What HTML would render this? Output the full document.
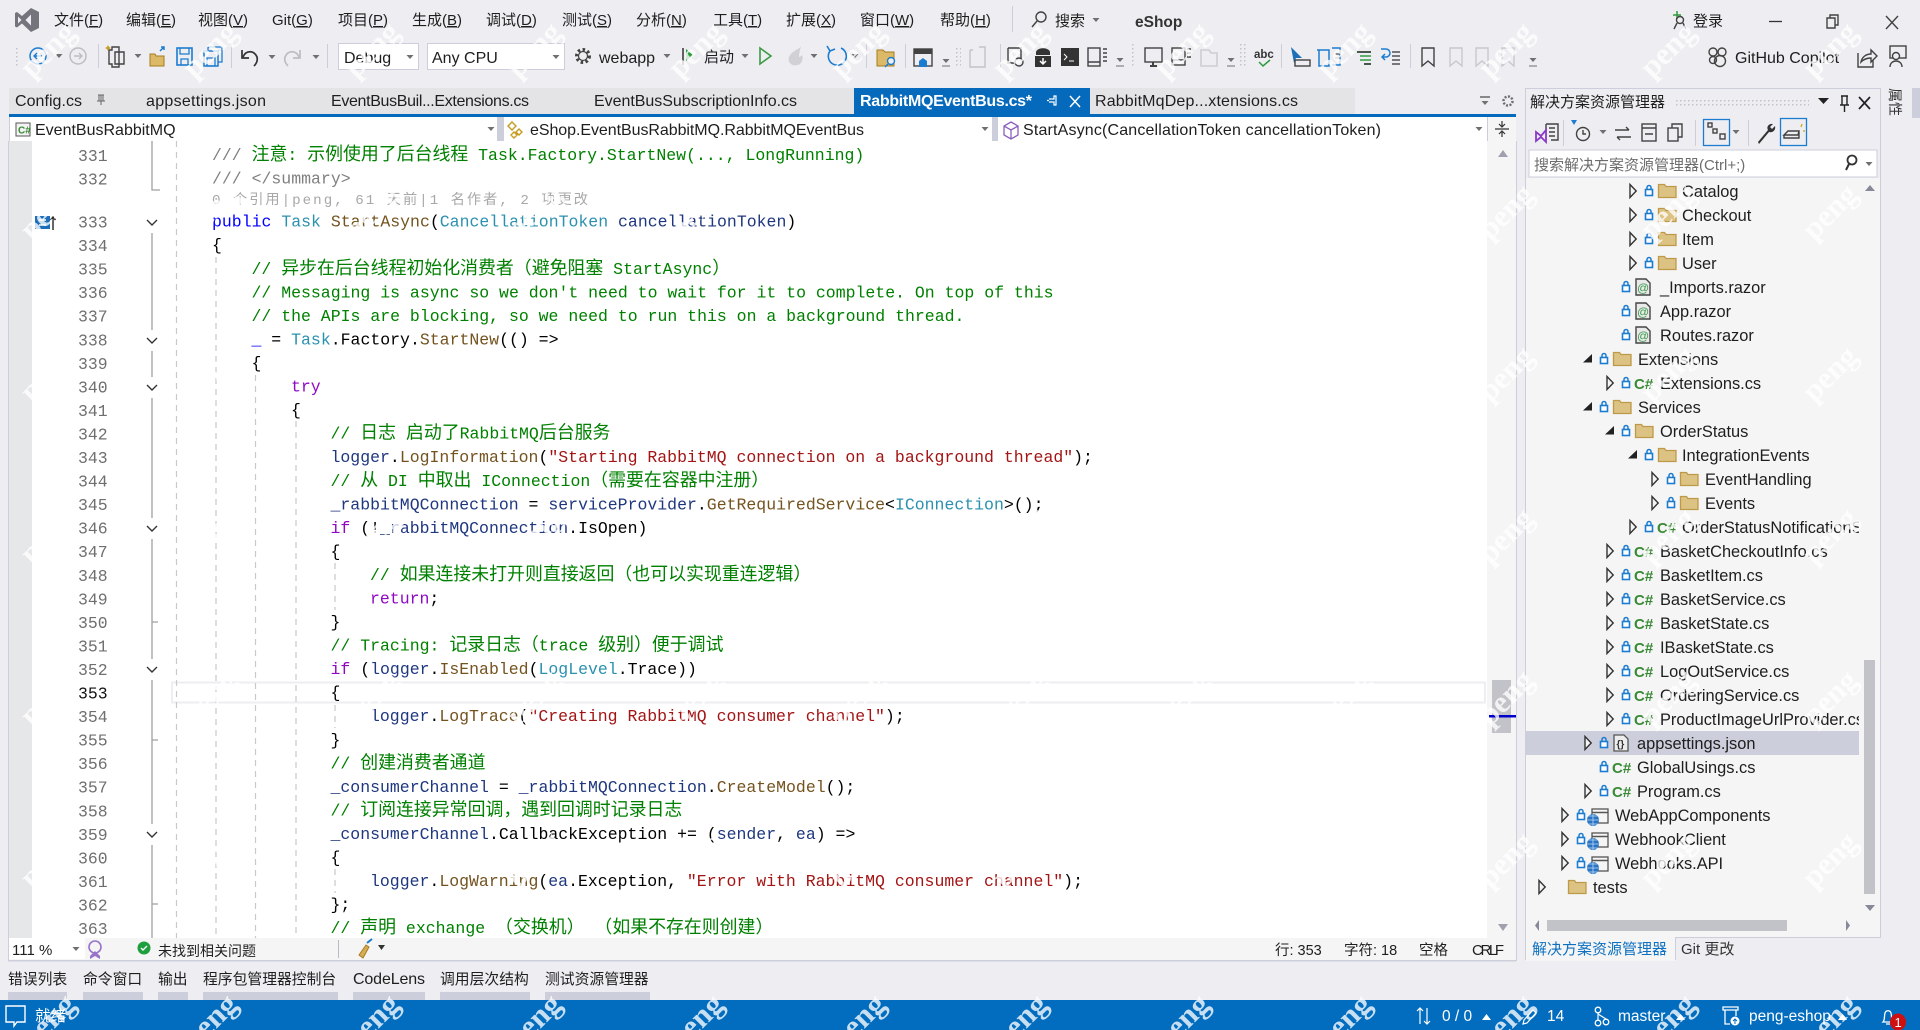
<!DOCTYPE html>
<html lang="zh"><head><meta charset="utf-8"><title>eShop</title>
<style>
html,body{margin:0;padding:0;background:#EEEEF2;width:1920px;height:1030px;overflow:hidden}
svg{display:block}
text{white-space:pre;font-family:"Liberation Sans","Noto Sans CJK SC",sans-serif;font-size:16px;fill:#1E1E1E}
.mn{font-size:15px}
.u{text-decoration:underline}
.code text,text.code{font-family:"Liberation Mono","Noto Sans CJK SC",monospace;font-size:16.5px;fill:#000}
.zh{font-family:"Noto Sans CJK SC",sans-serif;font-size:17.9px}
.c{fill:#008000}.d{fill:#808080}.k{fill:#0000FF}.f{fill:#8F08C4}.t{fill:#2B91AF}.m{fill:#74531F}.s{fill:#A31515}.v{fill:#1F377F}
.ln text{font-family:"Liberation Mono",monospace;font-size:16.47px;fill:#6F6F6F}
.tr text{font-size:16.4px;fill:#1E1E1E}
.tr text.cs{font-size:15px;font-weight:bold;fill:#388A34}
.w text{fill:#fff;font-size:15.5px}
.ic{fill:none;stroke:#424242;stroke-width:1.4}
</style></head><body>
<svg xmlns="http://www.w3.org/2000/svg" width="1920" height="1030" viewBox="0 0 1920 1030">
<defs>
<path id="dd" d="M-3.5-2h7l-3.5 4z" fill="#707070"/>
<path id="ch" d="M-3-6.5L3.2 0-3 6.5z" fill="#F5F5F5" stroke="#333" stroke-width="1.4"/>
<path id="cd" d="M4-5V3.5H-5z" fill="#222"/>
<g id="lk"><rect x="-3.5" y="-1.5" width="7" height="6" fill="#fff" stroke="#1C7CD0" stroke-width="1.6"/><path d="M-2-2v-1.5a2 2 0 0 1 4 0V-2" fill="none" stroke="#1C7CD0" stroke-width="1.5"/></g>
<path id="fo" d="M-8.5-6.5h6l1.5 2h10v11h-17.500z" fill="#DCC383" stroke="#BE9A48" stroke-width="1.3"/>
<g id="rz"><path d="M-7-8h10l4 4v12H-7z" fill="#E9E9E9" stroke="#444" stroke-width="1.4"/><text x="-6" y="5" style="font-size:12px;fill:#3C9A4B">@</text></g>
<g id="js"><path d="M-7-8h10l4 4v12H-7z" fill="#EDEDED" stroke="#555" stroke-width="1.3"/><text x="-4.500" y="4.500" style="font-size:10px;fill:#333;font-weight:bold">{}</text></g>
<g id="pj"><rect x="-6" y="-8" width="16" height="14" fill="#F5F5F5" stroke="#555" stroke-width="1.3"/><path d="M-6-4.500h16" stroke="#555" stroke-width="1.5"/><circle cx="-5" cy="3" r="6" fill="#2A74C5"/><path d="M-11 3h12M-5-3v12M-9.500-1h9M-9.500 7h9" stroke="#BFD8F2" stroke-width=".8"/></g>
<pattern id="wm" patternUnits="userSpaceOnUse" x="-32" y="-30" width="162" height="162"><text x="81" y="89" text-anchor="middle" transform="rotate(-45 81 81)" style="font-family:'Liberation Serif',serif;font-size:31px;font-weight:bold;fill:#fff;fill-opacity:.78">peng</text></pattern>
<clipPath id="trc"><rect x="1526" y="180" width="333" height="720"/></clipPath>
<clipPath id="edc"><rect x="9" y="141" width="1478" height="797"/></clipPath>
<pattern id="gr" patternUnits="userSpaceOnUse" width="4" height="4"><rect width="1.500" height="1.500" fill="#C2C2C8"/></pattern>
</defs>

<!-- backgrounds -->
<rect width="1920" height="1030" fill="#EEEEF2"/>
<rect x="9" y="88" width="1346" height="26" fill="#E4E4E6"/>
<rect x="854" y="88" width="236" height="26" fill="#0569BC"/>
<rect x="9" y="114" width="1507" height="3" fill="#0569BC"/>
<rect x="9" y="117" width="1507" height="24" fill="#CCCEDB"/>
<rect x="10" y="117" width="487" height="24" fill="#fff"/>
<rect x="504" y="117" width="488" height="24" fill="#fff"/>
<rect x="998" y="117" width="489" height="24" fill="#fff"/>
<rect x="1488" y="117" width="28" height="24" fill="#F5F5F5"/>
<rect x="9" y="141" width="1507" height="797" fill="#fff"/>
<rect x="9" y="141" width="23" height="797" fill="#E6E7E8"/>
<rect x="1487" y="141" width="29" height="797" fill="#F5F5F5"/>
<rect x="9" y="938" width="1507" height="22" fill="#F5F5F5"/>
<rect x="9" y="938" width="76" height="21" fill="#fff"/>
<rect x="8" y="960" width="1508" height="1.500" fill="#CCCEDB"/>
<rect x="1516" y="141" width="1" height="820" fill="#CCCEDB"/>
<rect x="8" y="141" width="1" height="820" fill="#CCCEDB"/>
<!-- explorer panel -->
<rect x="1525" y="88" width="356" height="872" fill="#CCCEDB"/>
<rect x="1526" y="89" width="354" height="848" fill="#EEEEF2"/>
<rect x="1526" y="178" width="354" height="759" fill="#F5F5F5"/>
<rect x="1529" y="150" width="348" height="27" fill="#fff" stroke="#CCCEDB"/>
<rect x="1526" y="937" width="149" height="24" fill="#F5F5F5"/>
<rect x="1676" y="938" width="205" height="23" fill="#EEEEF2"/>
<rect x="1526" y="731" width="333" height="24" fill="#CCCEDB"/>
<rect x="1864" y="660" width="11" height="234" fill="#C2C3C9"/>
<rect x="1547" y="920" width="240" height="11" fill="#C2C3C9"/>
<path d="M1870 185l5 6h-10zM1870 911l5-6h-10zM1539 920v11l-4-5.500zM1846 920v11l4-5.500z" fill="#868999"/>
<rect x="1912" y="88" width="8" height="30" fill="#CCCEDB"/>
<!-- status and bottom tabs -->
<rect x="8" y="992" width="59" height="8" fill="#CCCEDB"/><rect x="83" y="992" width="60" height="8" fill="#CCCEDB"/><rect x="158" y="992" width="30" height="8" fill="#CCCEDB"/><rect x="203" y="992" width="135" height="8" fill="#CCCEDB"/><rect x="353" y="992" width="72" height="8" fill="#CCCEDB"/><rect x="440" y="992" width="90" height="8" fill="#CCCEDB"/><rect x="545" y="992" width="105" height="8" fill="#CCCEDB"/>
<rect y="1000" width="1920" height="30" fill="#026CBE"/>

<!-- editor decorations -->
<rect x="172" y="682.500" width="1313" height="20" fill="#fff" stroke="#EEEEF2" stroke-width="2"/>
<rect x="1492" y="680" width="19" height="53" fill="#C2C3C9"/>
<path d="M1503 150l5 7h-10zM1503 931l5-7h-10z" fill="#A0A1AC"/>
<rect x="1489" y="715" width="27" height="2.500" fill="#0000CD"/>
<g stroke="#C9C9C9" stroke-dasharray="6 5" stroke-width="1.200" clip-path="url(#edc)">
<path d="M176.500 141V938"/><path d="M216 257V938"/><path d="M255.500 375V938"/><path d="M296 421V938"/><path d="M335 563V610M335 705V728M335 869V893"/>
</g>
<g stroke="#A0A0A0" stroke-width="1.300" fill="none">
<path d="M152 141V190H160M152 233V330M152 351V377M152 398V518M152 539V659M152 680V824M152 845V938"/>
<path d="M152 622h6M152 740h6M152 904h6"/>
</g>
<g fill="none" stroke="#333" stroke-width="1.400">
<path d="M147 220l5 5 5-5M147 338l5 5 5-5M147 385l5 5 5-5M147 526l5 5 5-5M147 667l5 5 5-5M147 832l5 5 5-5"/>
</g>
<rect x="35" y="216" width="15" height="13" fill="#1C6FB8"/><path d="M39 220h7M39 225h7" stroke="#fff" stroke-width="1.500"/><path d="M53 230v-13m-2.500 3l2.500-3 2.500 3" stroke="#333" stroke-width="1.500" fill="none"/>

<!-- line numbers -->
<g class="ln">
<text x="78" y="161">331</text><text x="78" y="184.500">332</text><text x="78" y="227.500">333</text><text x="78" y="251">334</text><text x="78" y="274.600">335</text><text x="78" y="298.200">336</text><text x="78" y="321.700">337</text><text x="78" y="345.300">338</text><text x="78" y="368.800">339</text><text x="78" y="392.400">340</text><text x="78" y="415.900">341</text><text x="78" y="439.500">342</text><text x="78" y="463">343</text><text x="78" y="486.600">344</text><text x="78" y="510.100">345</text><text x="78" y="533.700">346</text><text x="78" y="557.200">347</text><text x="78" y="580.800">348</text><text x="78" y="604.300">349</text><text x="78" y="627.900">350</text><text x="78" y="651.400">351</text><text x="78" y="675">352</text><text x="78" y="698.500" style="fill:#111">353</text><text x="78" y="722">354</text><text x="78" y="745.600">355</text><text x="78" y="769.200">356</text><text x="78" y="792.700">357</text><text x="78" y="816.300">358</text><text x="78" y="839.800">359</text><text x="78" y="863.400">360</text><text x="78" y="886.900">361</text><text x="78" y="910.500">362</text><text x="78" y="934">363</text>
</g>

<!-- code -->
<g class="code" clip-path="url(#edc)"><g transform="translate(0,-.8)">
<text x="212" y="161"><tspan class="d">/// </tspan><tspan class="c"><tspan class="zh">注意</tspan>: <tspan class="zh">示例使用了后台线程</tspan> Task.Factory.StartNew(..., LongRunning)</tspan></text>
<text x="212" y="184.500" class="d" style="fill:#808080">/// &lt;/summary&gt;</text>
<text x="212" y="205" textLength="376" style="fill:#A8A8A8;font-size:14.200px">0 个引用|peng, 61 天前|1 名作者, 2 项更改</text>
<text x="212" y="227.500"><tspan class="k">public</tspan> <tspan class="t">Task</tspan> <tspan class="m">StartAsync</tspan>(<tspan class="t">CancellationToken</tspan> <tspan class="v">cancellationToken</tspan>)</text>
<text x="212" y="251">{</text>
<text x="251.500" y="274.600" class="c" style="fill:#008000">// <tspan class="zh">异步在后台线程初始化消费者（避免阻塞</tspan> StartAsync<tspan class="zh">）</tspan></text>
<text x="251.500" y="298.200" style="fill:#008000">// Messaging is async so we don't need to wait for it to complete. On top of this</text>
<text x="251.500" y="321.700" style="fill:#008000">// the APIs are blocking, so we need to run this on a background thread.</text>
<text x="251.500" y="345.300"><tspan class="k">_</tspan> = <tspan class="t">Task</tspan>.Factory.<tspan class="m">StartNew</tspan>(() =&gt;</text>
<text x="251.500" y="368.800">{</text>
<text x="291" y="392.400" style="fill:#8F08C4">try</text>
<text x="291" y="415.900">{</text>
<text x="330.500" y="439.500" style="fill:#008000">// <tspan class="zh">日志</tspan> <tspan class="zh">启动了</tspan>RabbitMQ<tspan class="zh">后台服务</tspan></text>
<text x="330.500" y="463"><tspan class="v">logger</tspan>.<tspan class="m">LogInformation</tspan>(<tspan class="s">"Starting RabbitMQ connection on a background thread"</tspan>);</text>
<text x="330.500" y="486.600" style="fill:#008000">// <tspan class="zh">从</tspan> DI <tspan class="zh">中取出</tspan> IConnection<tspan class="zh">（需要在容器中注册）</tspan></text>
<text x="330.500" y="510.100"><tspan class="v">_rabbitMQConnection</tspan> = <tspan class="v">serviceProvider</tspan>.<tspan class="m">GetRequiredService</tspan>&lt;<tspan class="t">IConnection</tspan>&gt;();</text>
<text x="330.500" y="533.700"><tspan class="f">if</tspan> (!<tspan class="v">_rabbitMQConnection</tspan>.IsOpen)</text>
<text x="330.500" y="557.200">{</text>
<text x="370" y="580.800" style="fill:#008000">// <tspan class="zh">如果连接未打开则直接返回（也可以实现重连逻辑）</tspan></text>
<text x="370" y="604.300"><tspan class="f">return</tspan>;</text>
<text x="330.500" y="627.900">}</text>
<text x="330.500" y="651.400" style="fill:#008000">// Tracing: <tspan class="zh">记录日志（</tspan>trace <tspan class="zh">级别）便于调试</tspan></text>
<text x="330.500" y="675"><tspan class="f">if</tspan> (<tspan class="v">logger</tspan>.<tspan class="m">IsEnabled</tspan>(<tspan class="t">LogLevel</tspan>.Trace))</text>
<text x="330.500" y="698.500">{</text>
<text x="370" y="722"><tspan class="v">logger</tspan>.<tspan class="m">LogTrace</tspan>(<tspan class="s">"Creating RabbitMQ consumer channel"</tspan>);</text>
<text x="330.500" y="745.600">}</text>
<text x="330.500" y="769.200" style="fill:#008000">// <tspan class="zh">创建消费者通道</tspan></text>
<text x="330.500" y="792.700"><tspan class="v">_consumerChannel</tspan> = <tspan class="v">_rabbitMQConnection</tspan>.<tspan class="m">CreateModel</tspan>();</text>
<text x="330.500" y="816.300" style="fill:#008000">// <tspan class="zh">订阅连接异常回调，遇到回调时记录日志</tspan></text>
<text x="330.500" y="839.800"><tspan class="v">_consumerChannel</tspan>.CallbackException += (<tspan class="v">sender</tspan>, <tspan class="v">ea</tspan>) =&gt;</text>
<text x="330.500" y="863.400">{</text>
<text x="370" y="886.900"><tspan class="v">logger</tspan>.<tspan class="m">LogWarning</tspan>(<tspan class="v">ea</tspan>.Exception, <tspan class="s">"Error with RabbitMQ consumer channel"</tspan>);</text>
<text x="330.500" y="910.500">};</text>
<text x="330.500" y="934" style="fill:#008000">// <tspan class="zh">声明</tspan> exchange <tspan class="zh">（交换机）</tspan> <tspan class="zh">（如果不存在则创建）</tspan></text>
</g></g>

<!-- menu -->
<path fill-rule="evenodd" d="M31 8l8 4v16l-8 4-9-8.500-5 4-2-1V13l2-1 5 4zM31 14.500L25.500 20l5.500 5.500zM18 16.500v7l3.500-3.500z" fill="#74747C"/>
<g class="mnu">
<text class="mn" x="54" y="25">文件(<tspan class="u">F</tspan>)</text><text class="mn" x="126" y="25">编辑(<tspan class="u">E</tspan>)</text><text class="mn" x="198" y="25">视图(<tspan class="u">V</tspan>)</text><text class="mn" x="272" y="25">Git(<tspan class="u">G</tspan>)</text><text class="mn" x="338" y="25">项目(<tspan class="u">P</tspan>)</text><text class="mn" x="412" y="25">生成(<tspan class="u">B</tspan>)</text><text class="mn" x="486" y="25">调试(<tspan class="u">D</tspan>)</text><text class="mn" x="562" y="25">测试(<tspan class="u">S</tspan>)</text><text class="mn" x="636" y="25">分析(<tspan class="u">N</tspan>)</text><text class="mn" x="713" y="25">工具(<tspan class="u">T</tspan>)</text><text class="mn" x="786" y="25">扩展(<tspan class="u">X</tspan>)</text><text class="mn" x="860" y="25">窗口(<tspan class="u">W</tspan>)</text><text class="mn" x="940" y="25">帮助(<tspan class="u">H</tspan>)</text>
</g>
<rect x="1012" y="6" width="1" height="26" fill="#CCCEDB"/>
<circle cx="1041" cy="17" r="5" class="ic"/><path d="M1037 21l-5 6" class="ic"/>
<text class="mn" x="1055" y="26">搜索</text><use href="#dd" x="1096" y="20"/>
<text x="1135" y="27" style="font-size:15.500px;font-weight:bold;fill:#333">eShop</text>
<path d="M1677 11v8M1673 15h8" stroke="#2E9B3D" stroke-width="1.500"/><circle cx="1680" cy="20" r="3.500" class="ic"/><path d="M1674 29l3-6M1686 29l-3-6" class="ic"/>
<text class="mn" x="1693" y="26">登录</text>
<path d="M1769 21.500h13" stroke="#333" stroke-width="1.300"/>
<path d="M1827 18h8v10h-8zM1830 18v-3h8v10h-3" class="ic"/>
<path d="M1886 16l12 13M1898 16l-12 13" class="ic"/>

<!-- toolbar -->
<rect x="14" y="46" width="6" height="20" fill="url(#gr)"/>
<circle cx="38" cy="56" r="8" fill="none" stroke="#1C7CD0" stroke-width="1.500"/><path d="M42 56h-8m3-3l-3 3 3 3" fill="none" stroke="#1C7CD0" stroke-width="1.400"/><use href="#dd" x="59" y="56"/>
<circle cx="78" cy="56" r="8" fill="none" stroke="#BDBDC2" stroke-width="1.500"/><path d="M74 56h8m-3-3l3 3-3 3" fill="none" stroke="#BDBDC2" stroke-width="1.400"/>
<rect x="98" y="44" width="1" height="24" fill="#CCCEDB"/>
<path d="M109 50h3v-3h7v20h-7v-3h-3z" class="ic"/><path d="M115 52h9v12h-9z" class="ic"/><path d="M108 45l1 2 2 1-2 1-1 2-1-2-2-1 2-1z" fill="#C79A20"/><use href="#dd" x="138" y="56"/>
<path d="M150 54h5l1 2h8v10h-14z" fill="#DCB967" stroke="#A67C20"/><path d="M160 51l4-4m-3 0h3v3" stroke="#1C7CD0" stroke-width="1.500" fill="none"/>
<rect x="177" y="48" width="15" height="17" fill="none" stroke="#1C7CD0" stroke-width="1.600"/><path d="M180 48v6h9v-6M181 65v-6h7v6" fill="none" stroke="#1C7CD0" stroke-width="1.300"/>
<rect x="204" y="51" width="14" height="15" fill="none" stroke="#1C7CD0" stroke-width="1.500"/><path d="M208 51v-4h14v15h-4M207 58h8v8h-8z" fill="none" stroke="#1C7CD0" stroke-width="1.300"/>
<rect x="231" y="44" width="1" height="24" fill="#CCCEDB"/>
<path d="M242 50v8h7M243 57c3-7 11-7 14 0 1 4-1 7-3 9" fill="none" stroke="#333" stroke-width="1.700"/><use href="#dd" x="272" y="57"/>
<path d="M300 50v8h-7M299 57c-3-7-11-7-14 0-1 4 1 7 3 9" fill="none" stroke="#BDBDC2" stroke-width="1.700"/><use href="#dd" x="316" y="57"/>
<rect x="327" y="44" width="1" height="24" fill="#CCCEDB"/>
<rect x="338.500" y="43.500" width="80" height="26" fill="#fff" stroke="#CCCEDB"/><text x="344" y="63">Debug</text><use href="#dd" x="410" y="57"/>
<rect x="427.500" y="43.500" width="137" height="26" fill="#fff" stroke="#CCCEDB"/><text x="432" y="63">Any CPU</text><use href="#dd" x="556" y="57"/>
<circle cx="583" cy="56" r="6.500" fill="none" stroke="#424242" stroke-width="3" stroke-dasharray="2.500 2.500"/><circle cx="583" cy="56" r="4.500" fill="none" stroke="#424242" stroke-width="1.200"/>
<text x="599" y="63">webapp</text><use href="#dd" x="667" y="56"/>
<path d="M683 48v17" stroke="#333" stroke-width="1.500"/><path d="M686 49l7 6-7 6z" fill="#2E9B3D"/>
<text class="mn" x="704" y="62">启动</text><use href="#dd" x="745" y="56"/>
<path d="M760 48l11 8-11 8z" fill="none" stroke="#3B9B47" stroke-width="1.600"/>
<path d="M801 46c-1 3-7 4-10 8-3 3-3 7-1 9 2 3 7 3 10 1 3-3 3-7 2-9-1 1-2 2-3 2 0-4 1-7 2-11z" fill="#D0D0D5"/><use href="#dd" x="814" y="56"/>
<path d="M841 48a9 9 0 1 1-11 3M827 46l3 5 5-2" fill="none" stroke="#1C7CD0" stroke-width="1.600"/><use href="#dd" x="855" y="56"/>
<rect x="866" y="44" width="1" height="24" fill="#CCCEDB"/>
<path d="M877 50h6l2 2h9v14h-17z" fill="#DCB967" stroke="#A67C20"/><circle cx="891" cy="61" r="3.500" fill="#EEEEF2" stroke="#1C7CD0" stroke-width="1.400"/><path d="M888 64l-3 3" stroke="#1C7CD0" stroke-width="1.500"/>
<rect x="905" y="44" width="1" height="24" fill="#CCCEDB"/>
<rect x="914" y="49" width="18" height="17" class="ic"/><rect x="914" y="49" width="18" height="5" fill="#424242"/><path d="M919 67v-6l4-3 4 3v6z" fill="#1C7CD0"/>
<use href="#dd" x="946" y="61"/><path d="M942 66h8" stroke="#707070"/>
<rect x="956" y="46" width="5" height="22" fill="url(#gr)"/>
<path d="M970 50h3M979 47h6v20h-15V50" fill="none" stroke="#C4C4C8" stroke-width="1.400"/>
<rect x="1000" y="44" width="1" height="24" fill="#CCCEDB"/>
<path d="M1008 48h13v10M1008 48v15h6" class="ic"/><circle cx="1019" cy="62" r="4" class="ic"/>
<path d="M1036 52c1-5 13-5 14 0v3h-14z" fill="#333"/><path d="M1035 56h16v11h-16z" fill="#333"/><path d="M1043 58v5m-3-2l3 3 3-3" stroke="#fff" stroke-width="1.500" fill="none"/>
<rect x="1061" y="48" width="18" height="18" fill="#333"/><path d="M1064 54l3 3-3 3M1069 61h5" stroke="#fff" fill="none"/>
<rect x="1088" y="48" width="12" height="18" class="ic"/><path d="M1088 62h12M1103 49h4M1103 53h4M1103 57h4M1103 61h4" stroke="#424242" stroke-width="1.500"/>
<use href="#dd" x="1120" y="60"/><path d="M1116 66h8" stroke="#707070"/><rect x="1130" y="44" width="6" height="24" fill="url(#gr)"/>
<rect x="1145" y="48" width="17" height="14" class="ic"/><path d="M1150 66h7M1153 62v4" stroke="#424242" stroke-width="2"/>
<rect x="1172" y="48" width="13" height="17" class="ic"/><path d="M1172 60h13M1187 49h4M1187 53h4M1187 57h4" stroke="#424242" stroke-width="1.400"/>
<path d="M1201 50h8l2 3h6v13h-16z" fill="none" stroke="#CDCDD1" stroke-width="1.600"/>
<use href="#dd" x="1231" y="60"/><path d="M1227 66h8" stroke="#707070"/><rect x="1240" y="44" width="6" height="24" fill="url(#gr)"/>
<text x="1254" y="58" style="font-size:11.500px;font-weight:bold;fill:#333">abc</text><path d="M1259 62l4 4 7-6" fill="none" stroke="#2E9B3D" stroke-width="1.500"/>
<rect x="1281" y="44" width="1" height="24" fill="#CCCEDB"/>
<path d="M1291 47l11 11h-6l-2 5z" fill="#1C6FB8"/><rect x="1295" y="60" width="15" height="6" class="ic"/>
<path d="M1319 50h10v16h-10zM1319 50h-2M1332 48h8v17h-8" fill="none" stroke="#1C7CD0" stroke-width="1.500"/><path d="M1335 54h5M1335 58h5" stroke="#333"/>
<path d="M1357 52h14M1360 56h11M1360 60h11M1364 64h7" stroke="#2E9B3D" stroke-width="1.500"/><path d="M1357 52h14M1364 64h7" stroke="#333" stroke-width="1.500"/>
<path d="M1381 49h5a4 4 0 0 1 0 8h-3m2-3l-3 3 3 3" stroke="#1C7CD0" stroke-width="1.500" fill="none"/><path d="M1392 52h8M1392 56h8M1392 60h8M1392 64h8" stroke="#333" stroke-width="1.300"/>
<rect x="1410" y="44" width="1" height="24" fill="#CCCEDB"/>
<path d="M1422 48h12v18l-6-5-6 5z" class="ic"/>
<path d="M1450 48h12v18l-6-5-6 5z" fill="none" stroke="#C8C8CC" stroke-width="1.400"/><path d="M1476 48h12v18l-6-5-6 5z" fill="none" stroke="#C8C8CC" stroke-width="1.400"/><path d="M1502 48h12v18l-6-5-6 5z" fill="none" stroke="#C8C8CC" stroke-width="1.400"/>
<use href="#dd" x="1533" y="60"/><path d="M1529 66h8" stroke="#707070"/>
<circle cx="1713" cy="52" r="4" class="ic"/><circle cx="1722" cy="52" r="4" class="ic"/><circle cx="1720" cy="61" r="5.500" class="ic"/><circle cx="1713" cy="60" r="3.500" class="ic"/>
<text x="1735" y="63">GitHub Copilot</text>
<path d="M1858 53v14h15v-7M1861 62c1-5 5-8 10-8v-4l6 6-6 6v-4c-4 0-7 1-10 4z" class="ic"/>
<rect x="1890" y="46" width="16" height="12" class="ic"/><circle cx="1896" cy="56" r="3.500" fill="#EEEEF2" stroke="#424242" stroke-width="1.400"/><path d="M1890 67c0-4 3-6 6-6s6 2 6 6" class="ic"/>

<!-- document tabs -->
<text x="15" y="106" textLength="67">Config.cs</text><path d="M98 95h6M101 95v6M97 101h8M101 101v4M99 95v6M103 95v6" stroke="#666" fill="none"/>
<text x="146" y="106" textLength="120">appsettings.json</text>
<text x="331" y="106" textLength="198">EventBusBuil...Extensions.cs</text>
<text x="594" y="106" textLength="203">EventBusSubscriptionInfo.cs</text>
<text x="860" y="106" textLength="172" style="fill:#fff;font-weight:bold">RabbitMQEventBus.cs*</text>
<path d="M1049 99h5v-3h2v9h-2v-3h-5M1047 100.500h2" stroke="#fff" stroke-width="1.200" fill="none"/>
<path d="M1070 96l10 11M1080 96l-10 11" stroke="#fff" stroke-width="1.500"/>
<text x="1095" y="106" textLength="203">RabbitMqDep...xtensions.cs</text>
<path d="M1480 97h10" stroke="#666" stroke-width="1.500"/><use href="#dd" x="1485" y="103"/>
<circle cx="1508" cy="101" r="4.500" fill="none" stroke="#6E6E6E" stroke-width="2.500" stroke-dasharray="2 1.500"/>

<!-- navigation bar -->
<rect x="16" y="123" width="14" height="13" fill="#F3F3F3" stroke="#555"/><text x="18" y="133.500" style="font-size:10px;font-weight:bold;fill:#388A34">C#</text>
<text x="35" y="135">EventBusRabbitMQ</text><use href="#dd" x="491" y="129"/>
<path d="M512 122l4 4-4 4-4-4zM519 129l3 3-3 3-3-3zM514 132l3 3-3 3-3-3z" fill="none" stroke="#C79A20" stroke-width="1.400"/>
<text x="530" y="135" textLength="334">eShop.EventBusRabbitMQ.RabbitMQEventBus</text><use href="#dd" x="985" y="129"/>
<path d="M1011 122l7 4v9l-7 4-7-4v-9zM1004 126l7 4 7-4M1011 130v9" fill="none" stroke="#8B5FBF" stroke-width="1.300"/>
<text x="1023" y="135" textLength="358">StartAsync(CancellationToken cancellationToken)</text><use href="#dd" x="1479" y="129"/>
<path d="M1502 121v6m-3-3l3 3 3-3M1502 137v-6m-3 3l3-3 3 3M1495 129h14" stroke="#333" fill="none" stroke-width="1.200"/>

<!-- editor status -->
<text x="12" y="955" style="font-size:15px">111 %</text><use href="#dd" x="76" y="949"/>
<circle cx="95" cy="947" r="6" fill="none" stroke="#9873C9" stroke-width="1.600"/><path d="M90 956l5-5 5 5v3l-5-3-5 3z" fill="#9873C9"/>
<circle cx="144" cy="948" r="6.500" fill="#1E9F3E"/><path d="M141 948l2 2 4-4" stroke="#fff" stroke-width="1.400" fill="none"/>
<text x="158" y="956" style="font-size:14px">未找到相关问题</text>
<rect x="338" y="940" width="1" height="18" fill="#B8B9C4"/>
<path d="M359 955l7-10 3 2-6 11z" fill="#D6AD55" stroke="#A67C20"/><path d="M367 943l5-4" stroke="#1C7CD0" stroke-width="2"/><path d="M378 945h7l-3.500 5z" fill="#333"/>
<text x="1275" y="955" style="font-size:14.500px">行: 353</text><text x="1344" y="955" style="font-size:14.500px">字符: 18</text><text x="1419" y="955" style="font-size:14.500px">空格</text><text x="1472" y="955" textLength="32" style="font-size:15px">CRLF</text>

<!-- bottom tabs -->
<text x="8" y="984" style="font-size:14.800px">错误列表</text><text x="83" y="984" style="font-size:14.800px">命令窗口</text><text x="158" y="984" style="font-size:14.800px">输出</text><text x="203" y="984" style="font-size:14.800px">程序包管理器控制台</text><text x="353" y="984" textLength="72">CodeLens</text><text x="440" y="984" style="font-size:14.800px">调用层次结构</text><text x="545" y="984" style="font-size:14.800px">测试资源管理器</text>

<!-- explorer header -->
<text x="1530" y="107" style="font-size:15px">解决方案资源管理器</text>
<rect x="1675" y="98" width="134" height="8" fill="url(#gr)"/>
<path d="M1818 98h11l-5.500 6z" fill="#222"/>
<path d="M1841 96h7M1842 96v9M1847 96v9M1840 105h9M1844.500 105v7" stroke="#222" stroke-width="1.400" fill="none"/>
<path d="M1859 97l11 12M1870 97l-11 12" stroke="#222" stroke-width="1.700"/>
<!-- explorer toolbar -->
<path d="M1546 124h12v16h-7M1546 124v7M1549 128h6M1549 132h6M1549 136h6" class="ic"/><path d="M1536 132l5 4 5-6v12l-5-5-5 4z" fill="none" stroke="#8A3BC6" stroke-width="1.800"/>
<rect x="1563" y="120" width="1" height="26" fill="#CCCEDB"/>
<path d="M1571 120h6l-3 5z" fill="#1C7CD0"/><circle cx="1583" cy="134" r="6.500" class="ic"/><path d="M1583 130v4h3" class="ic"/><use href="#dd" x="1603" y="132"/>
<path d="M1615 130h14m-3-3l3 3M1631 137h-14m3 3l-3-3" class="ic"/>
<rect x="1642" y="124" width="14" height="17" class="ic"/><path d="M1642 128h14M1645 134h8" class="ic"/>
<rect x="1668" y="128" width="10" height="13" class="ic"/><path d="M1672 128v-4h10v13h-4" class="ic"/>
<rect x="1695" y="120" width="1" height="26" fill="#CCCEDB"/>
<rect x="1703.500" y="119.500" width="26" height="26" fill="none" stroke="#1C7CD0" stroke-width="1.300"/><rect x="1708" y="123" width="4" height="4" class="ic"/><rect x="1713" y="129" width="4" height="4" class="ic"/><rect x="1720" y="134" width="5" height="5" class="ic"/><use href="#dd" x="1736" y="132"/>
<rect x="1748" y="120" width="1" height="26" fill="#CCCEDB"/>
<path d="M1758 142l10-12c-2-3 1-7 5-6l-3 3 2 2 3-3c1 4-2 7-6 6l-10 12z" fill="#333"/>
<rect x="1780.500" y="118.500" width="26" height="27" fill="none" stroke="#1C7CD0" stroke-width="1.300"/><path d="M1784 135h14l1-4h-11zM1784 135v3h15v-7" class="ic"/><path d="M1801 127l1-3M1803 131h2" stroke="#D4A017" stroke-width="1.200"/>
<text x="1534" y="170" style="font-size:15px;fill:#6D6D6D">搜索解决方案资源管理器(Ctrl+;)</text>
<circle cx="1852" cy="160" r="4.500" fill="none" stroke="#333" stroke-width="1.800"/><path d="M1849 164l-3 6" stroke="#333" stroke-width="2"/><use href="#dd" x="1869" y="164"/>

<!-- solution tree -->
<g clip-path="url(#trc)"><g class="tr" transform="translate(0,-1)">
<use href="#ch" x="1633" y="192"/><use href="#lk" x="1649" y="192"/><use href="#fo" x="1667" y="192"/><text x="1682" y="198">Catalog</text>
<use href="#ch" x="1633" y="216"/><use href="#lk" x="1649" y="216"/><use href="#fo" x="1667" y="216"/><text x="1682" y="222">Checkout</text>
<use href="#ch" x="1633" y="240"/><use href="#lk" x="1649" y="240"/><use href="#fo" x="1667" y="240"/><text x="1682" y="246">Item</text>
<use href="#ch" x="1633" y="264"/><use href="#lk" x="1649" y="264"/><use href="#fo" x="1667" y="264"/><text x="1682" y="270">User</text>
<use href="#lk" x="1626" y="288"/><use href="#rz" x="1643" y="288"/><text x="1660" y="294">_Imports.razor</text>
<use href="#lk" x="1626" y="312"/><use href="#rz" x="1643" y="312"/><text x="1660" y="318">App.razor</text>
<use href="#lk" x="1626" y="336"/><use href="#rz" x="1643" y="336"/><text x="1660" y="342">Routes.razor</text>
<use href="#cd" x="1588" y="360"/><use href="#lk" x="1604" y="360"/><use href="#fo" x="1622" y="360"/><text x="1638" y="366">Extensions</text>
<use href="#ch" x="1610" y="384"/><use href="#lk" x="1626" y="384"/><text class="cs" x="1634" y="390">C#</text><text x="1660" y="390">Extensions.cs</text>
<use href="#cd" x="1588" y="408"/><use href="#lk" x="1604" y="408"/><use href="#fo" x="1622" y="408"/><text x="1638" y="414">Services</text>
<use href="#cd" x="1610" y="432"/><use href="#lk" x="1626" y="432"/><use href="#fo" x="1644" y="432"/><text x="1660" y="438">OrderStatus</text>
<use href="#cd" x="1633" y="456"/><use href="#lk" x="1649" y="456"/><use href="#fo" x="1667" y="456"/><text x="1682" y="462">IntegrationEvents</text>
<use href="#ch" x="1655" y="480"/><use href="#lk" x="1671" y="480"/><use href="#fo" x="1689" y="480"/><text x="1705" y="486">EventHandling</text>
<use href="#ch" x="1655" y="504"/><use href="#lk" x="1671" y="504"/><use href="#fo" x="1689" y="504"/><text x="1705" y="510">Events</text>
<use href="#ch" x="1633" y="528"/><use href="#lk" x="1649" y="528"/><text class="cs" x="1657" y="534">C#</text><text x="1682" y="534">OrderStatusNotificationService.cs</text>
<use href="#ch" x="1610" y="552"/><use href="#lk" x="1626" y="552"/><text class="cs" x="1634" y="558">C#</text><text x="1660" y="558">BasketCheckoutInfo.cs</text>
<use href="#ch" x="1610" y="576"/><use href="#lk" x="1626" y="576"/><text class="cs" x="1634" y="582">C#</text><text x="1660" y="582">BasketItem.cs</text>
<use href="#ch" x="1610" y="600"/><use href="#lk" x="1626" y="600"/><text class="cs" x="1634" y="606">C#</text><text x="1660" y="606">BasketService.cs</text>
<use href="#ch" x="1610" y="624"/><use href="#lk" x="1626" y="624"/><text class="cs" x="1634" y="630">C#</text><text x="1660" y="630">BasketState.cs</text>
<use href="#ch" x="1610" y="648"/><use href="#lk" x="1626" y="648"/><text class="cs" x="1634" y="654">C#</text><text x="1660" y="654">IBasketState.cs</text>
<use href="#ch" x="1610" y="672"/><use href="#lk" x="1626" y="672"/><text class="cs" x="1634" y="678">C#</text><text x="1660" y="678">LogOutService.cs</text>
<use href="#ch" x="1610" y="696"/><use href="#lk" x="1626" y="696"/><text class="cs" x="1634" y="702">C#</text><text x="1660" y="702">OrderingService.cs</text>
<use href="#ch" x="1610" y="720"/><use href="#lk" x="1626" y="720"/><text class="cs" x="1634" y="726">C#</text><text x="1660" y="726">ProductImageUrlProvider.cs</text>
<use href="#ch" x="1588" y="744"/><use href="#lk" x="1604" y="744"/><use href="#js" x="1621" y="744"/><text x="1637" y="750">appsettings.json</text>
<use href="#lk" x="1604" y="768"/><text class="cs" x="1612" y="774">C#</text><text x="1637" y="774">GlobalUsings.cs</text>
<use href="#ch" x="1588" y="792"/><use href="#lk" x="1604" y="792"/><text class="cs" x="1612" y="798">C#</text><text x="1637" y="798">Program.cs</text>
<use href="#ch" x="1565" y="816"/><use href="#lk" x="1581" y="816"/><use href="#pj" x="1598" y="818"/><text x="1615" y="822">WebAppComponents</text>
<use href="#ch" x="1565" y="840"/><use href="#lk" x="1581" y="840"/><use href="#pj" x="1598" y="842"/><text x="1615" y="846">WebhookClient</text>
<use href="#ch" x="1565" y="864"/><use href="#lk" x="1581" y="864"/><use href="#pj" x="1598" y="866"/><text x="1615" y="870">Webhooks.API</text>
<use href="#ch" x="1542" y="888"/><use href="#fo" x="1577" y="888"/><text x="1593" y="894">tests</text>
</g></g>
<text x="1532" y="954" style="font-size:15px;fill:#0E70C0">解决方案资源管理器</text>
<text x="1681" y="954" style="font-size:15px;fill:#333">Git 更改</text>
<text transform="translate(1890,88) rotate(90)" style="font-size:14px;fill:#333">属性</text>

<!-- status bar -->
<g class="w">
<path d="M6 1006h19v16h-8l-3 4v-4H6z" fill="none" stroke="#fff" stroke-width="1.400"/>
<text x="35" y="1021">就绪</text>
<path d="M1420 1024v-16m-3 3l3-3 3 3M1427 1008v16m-3-3l3 3 3-3" stroke="#fff" fill="none" stroke-width="1.200"/>
<text x="1442" y="1021">0 / 0</text><path d="M1482 1020l4.500-6 4.500 6z" fill="#fff"/>
<path d="M1523 1024l1-4 9-10 3 3-9 10z" fill="none" stroke="#fff" stroke-width="1.200"/>
<text x="1547" y="1021">14</text>
<circle cx="1598" cy="1010" r="2.800" fill="none" stroke="#fff" stroke-width="1.300"/><circle cx="1598" cy="1023" r="2.800" fill="none" stroke="#fff" stroke-width="1.300"/><circle cx="1606" cy="1022" r="2.800" fill="none" stroke="#fff" stroke-width="1.300"/><path d="M1598 1013v7M1598 1014l8 5" stroke="#fff" stroke-width="1.200"/>
<text x="1618" y="1021">master</text><path d="M1676 1020l4.500-6 4.500 6z" fill="#fff"/>
<path d="M1723 1007h15v3h-15zM1725 1010v14h5M1736 1010v6" stroke="#fff" fill="none" stroke-width="1.300"/><circle cx="1735" cy="1021" r="4.500" fill="#fff"/><path d="M1735 1024v-5m-2 2l2-2 2 2" stroke="#026CBE" fill="none"/>
<text x="1749" y="1021">peng-eshop</text><path d="M1838 1020l4.500-6 4.500 6z" fill="#fff"/>
<path d="M1883 1022c2-2 1-5 2-9 1-3 5-3 6 0 1 4 0 7 2 9zM1886 1024h4" fill="none" stroke="#fff" stroke-width="1.300"/>
<ellipse cx="1898" cy="1022" rx="8" ry="8.500" fill="#D01010"/><text x="1894.500" y="1027" style="font-size:13px;fill:#fff">1</text>
</g>

<!-- watermark -->
<rect width="1920" height="1030" fill="url(#wm)"/>
</svg>
</body></html>
